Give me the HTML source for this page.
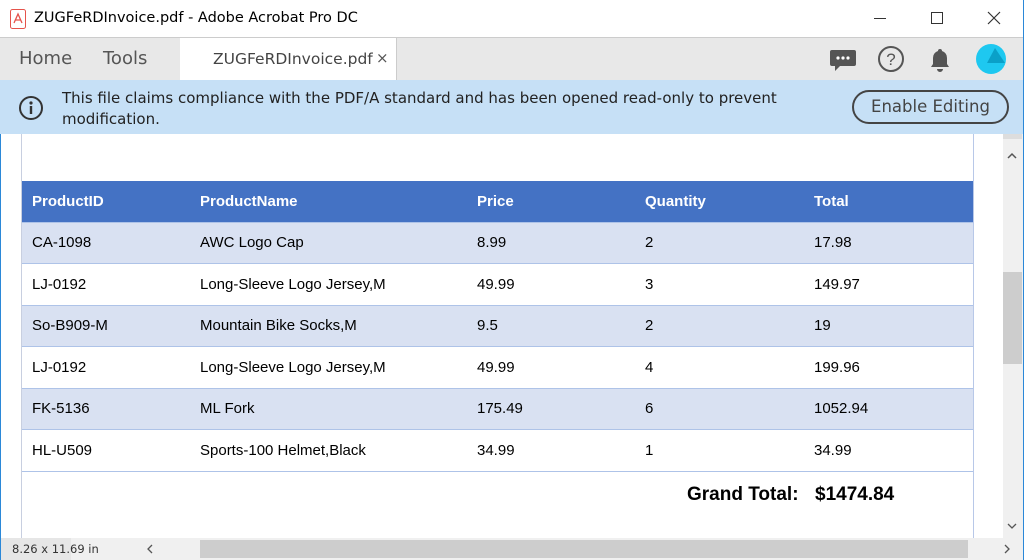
<!DOCTYPE html>
<html><head><meta charset="utf-8"><style>
*{margin:0;padding:0;box-sizing:border-box}
body{width:1024px;height:560px;overflow:hidden;background:#fff;font-family:"Liberation Sans",sans-serif;position:relative}
.abs{position:absolute}
.ui{font-family:"DejaVu Sans","Liberation Sans",sans-serif}
#title{left:0;top:0;width:1024px;height:38px;background:#fff;border-bottom:1px solid #ccc}
#tabs{left:0;top:38px;width:1024px;height:42px;background:#e8e8e8}
#info{left:0;top:80px;width:1024px;height:54px;background:#c6e0f6}
table{position:absolute;left:22px;top:181px;width:951px;border-collapse:collapse;font-size:15px}
td{height:41.5px;padding-left:10px;border-top:1px solid #aec3e8;color:#000}
th{height:41px;padding-left:10px;text-align:left;background:#4472c4;color:#fff;font-size:15px}
tr.o td{background:#d9e1f2}
</style></head><body>
<div id="title" class="abs">
 <svg class="abs" style="left:10px;top:9px" width="16" height="20"><rect x="0.5" y="0.5" width="15" height="19" rx="2" fill="#fff" stroke="#e5534b"/><path d="M4 14 L8 5 L12 14 M5 11 H11" stroke="#e5534b" fill="none" stroke-width="1.3"/></svg>
 <div class="abs ui" style="left:34px;top:10px;font-size:14.5px;color:#000">ZUGFeRDInvoice.pdf - Adobe Acrobat Pro DC</div>
 <div class="abs" style="left:874px;top:18px;width:12px;height:1px;background:#333"></div>
 <div class="abs" style="left:931px;top:12px;width:12px;height:12px;border:1px solid #333"></div>
 <svg class="abs" style="left:987px;top:11px" width="14" height="14"><path d="M1 1L13 13M13 1L1 13" stroke="#333" stroke-width="1.2"/></svg>
</div>
<div id="tabs" class="abs">
 <div class="abs ui" style="left:19px;top:10px;font-size:18px;color:#555">Home</div>
 <div class="abs ui" style="left:103px;top:10px;font-size:18px;color:#555">Tools</div>
 <div class="abs" style="left:180px;top:0;width:217px;height:42px;background:#fff;border-right:1px solid #ccc"></div>
 <div class="abs ui" style="left:213px;top:12px;font-size:15.5px;color:#444">ZUGFeRDInvoice.pdf</div>
 <div class="abs ui" style="left:376px;top:11px;font-size:15px;color:#555">×</div>
 <svg class="abs" style="left:829px;top:8px" width="28" height="28"><path d="M3 4h22a2 2 0 0 1 2 2v12a2 2 0 0 1-2 2H11l-5 5v-5H3a2 2 0 0 1-2-2V6a2 2 0 0 1 2-2z" fill="#555"/><circle cx="9" cy="12" r="1.6" fill="#fff"/><circle cx="14" cy="12" r="1.6" fill="#fff"/><circle cx="19" cy="12" r="1.6" fill="#fff"/></svg>
 <svg class="abs" style="left:877px;top:7px" width="28" height="28"><circle cx="14" cy="14" r="12" fill="none" stroke="#555" stroke-width="2"/><text x="14" y="20" text-anchor="middle" font-size="17" font-family="Liberation Sans" fill="#555">?</text></svg>
 <svg class="abs" style="left:928px;top:8px" width="24" height="28"><path d="M12 3a2 2 0 0 1 2 2a7 7 0 0 1 5 7v6l2 3H3l2-3v-6a7 7 0 0 1 5-7a2 2 0 0 1 2-2zM9 23h6a3 3 0 0 1-6 0z" fill="#555"/></svg>
 <svg class="abs" style="left:975px;top:5px" width="32" height="32"><circle cx="16" cy="16" r="15" fill="#1ec8f0"/><path d="M20 5 L30 20 L12 20 Z" fill="#0aa0c8"/></svg>
</div>
<div id="info" class="abs">
 <svg class="abs" style="left:18px;top:15px" width="26" height="26"><circle cx="13" cy="13" r="11" fill="none" stroke="#333" stroke-width="2"/><circle cx="13" cy="8" r="1.6" fill="#333"/><rect x="11.8" y="11" width="2.4" height="8" fill="#333"/></svg>
 <div class="abs ui" style="left:62px;top:8px;font-size:15px;line-height:21px;color:#222;width:760px">This file claims compliance with the PDF/A standard and has been opened read-only to prevent modification.</div>
 <div class="abs ui" style="left:852px;top:10px;width:157px;height:34px;border:2px solid #444;border-radius:17px;font-size:16.5px;color:#444;text-align:center;line-height:30px">Enable Editing</div>
</div>
<div class="abs" style="left:0;top:134px;width:1px;height:426px;background:#2b88d8"></div>
<div class="abs" style="left:1023px;top:0;width:1px;height:560px;background:#2b88d8"></div>
<div class="abs" style="left:21px;top:134px;width:1px;height:404px;background:#c8cfe0"></div>
<div class="abs" style="left:973px;top:134px;width:1px;height:404px;background:#b8c8e8"></div>
<div class="abs" style="left:1003px;top:134px;width:20px;height:404px;background:#f0f0f0"></div>
<div class="abs" style="left:1003px;top:134px;width:19px;height:5px;background:#ddd"></div>
<div class="abs" style="left:1003px;top:272px;width:19px;height:92px;background:#cdcdcd"></div>
<svg class="abs" style="left:1007px;top:152px" width="10" height="8"><path d="M1 6L5 2L9 6" stroke="#555" stroke-width="1.5" fill="none"/></svg>
<svg class="abs" style="left:1007px;top:522px" width="10" height="8"><path d="M1 2L5 6L9 2" stroke="#555" stroke-width="1.3" fill="none"/></svg>
<table>
<tr><th style="width:168px">ProductID</th><th style="width:277px">ProductName</th><th style="width:168px">Price</th><th style="width:169px">Quantity</th><th>Total</th></tr>
<tr class="o"><td>CA-1098</td><td>AWC Logo Cap</td><td>8.99</td><td>2</td><td>17.98</td></tr>
<tr><td>LJ-0192</td><td>Long-Sleeve Logo Jersey,M</td><td>49.99</td><td>3</td><td>149.97</td></tr>
<tr class="o"><td>So-B909-M</td><td>Mountain Bike Socks,M</td><td>9.5</td><td>2</td><td>19</td></tr>
<tr><td>LJ-0192</td><td>Long-Sleeve Logo Jersey,M</td><td>49.99</td><td>4</td><td>199.96</td></tr>
<tr class="o"><td>FK-5136</td><td>ML Fork</td><td>175.49</td><td>6</td><td>1052.94</td></tr>
<tr><td>HL-U509</td><td>Sports-100 Helmet,Black</td><td>34.99</td><td>1</td><td>34.99</td></tr>
</table>
<div class="abs" style="left:22px;top:471px;width:951px;height:1px;background:#aec3e8"></div>
<div class="abs" style="left:687px;top:484px;font-size:19px;font-weight:bold;color:#000">Grand Total:</div>
<div class="abs" style="left:815px;top:484px;font-size:19px;font-weight:bold;color:#000">$1474.84</div>
<div class="abs" style="left:1px;top:538px;width:1022px;height:22px;background:#f0f0f0"></div>
<div class="abs" style="left:1px;top:538px;width:70px;height:22px;background:#e6e6e6"></div>
<div class="abs ui" style="left:12px;top:542px;font-size:11.5px;color:#333">8.26 x 11.69 in</div>
<svg class="abs" style="left:146px;top:544px" width="8" height="10"><path d="M6 1L2 5L6 9" stroke="#555" stroke-width="1.3" fill="none"/></svg>
<div class="abs" style="left:200px;top:540px;width:768px;height:18px;background:#cdcdcd"></div>
<svg class="abs" style="left:1003px;top:544px" width="8" height="10"><path d="M2 1L6 5L2 9" stroke="#555" stroke-width="1.3" fill="none"/></svg>
</body></html>
